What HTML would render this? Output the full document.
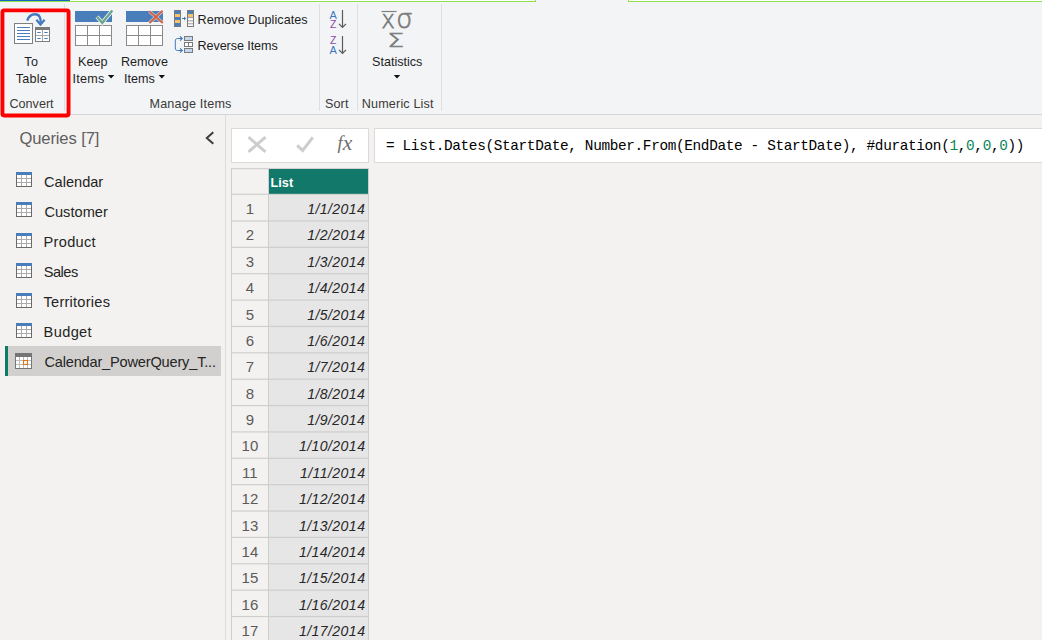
<!DOCTYPE html>
<html><head><meta charset="utf-8"><title>Power Query Editor</title>
<style>
*{box-sizing:border-box;margin:0;padding:0}
html,body{width:1042px;height:640px;overflow:hidden;background:#f3f2f1}
body{position:relative;font-family:"Liberation Sans",sans-serif;color:#252423}
.abs,.t,.sep,svg{position:absolute}
.t{white-space:nowrap;line-height:16px;font-size:12.6px;color:#1e1e1e}
#ribbon{position:absolute;left:0;top:0;width:1042px;height:114px;background:#f3f4f6}
#ribbonline{position:absolute;left:0;top:114px;width:1042px;height:1px;background:#d6d6d6}
.sep{width:1px;top:4px;height:107px;background:#dedfe1}
.gl{color:#3b3a39}
.q{font-size:14.6px;line-height:20px;color:#252423;left:44px}
.qi{left:16px;width:17px;height:16px}
.idx{position:absolute;left:231.4px;width:37px;text-align:center;font-size:15px;line-height:20px;color:#5d5b59}
.dt{position:absolute;left:270px;width:95.4px;text-align:right;font-style:italic;font-size:14.1px;letter-spacing:0.42px;line-height:20px;color:#262626}
#fx{font-family:"Liberation Mono",monospace;font-size:14.4px;letter-spacing:-0.35px;line-height:20px;color:#000;left:386px;top:136px;white-space:pre}
#fx b{font-weight:normal;color:#098658}
</style></head><body>
<div id="ribbon"></div>
<div id="ribbonline"></div>
<!-- top lines -->
<div class="abs" style="left:0;top:0;width:70px;height:1px;background:#1565c0"></div>
<div class="abs" style="left:70px;top:0;width:466px;height:1px;background:#fff"></div>
<div class="abs" style="left:0;top:1px;width:536px;height:1px;background:#8fe04a"></div>
<div class="abs" style="left:628px;top:0;width:414px;height:1px;background:#fff"></div>
<div class="abs" style="left:628px;top:1px;width:414px;height:1px;background:#8fe04a"></div>
<div class="abs" style="left:535px;top:0;width:1px;height:2px;background:#8fe04a"></div>
<div class="abs" style="left:628px;top:0;width:1px;height:2px;background:#8fe04a"></div>

<div class="sep" style="left:64px"></div>
<div class="sep" style="left:319px"></div>
<div class="sep" style="left:357px"></div>
<div class="sep" style="left:441px"></div>

<!-- ribbon labels -->
<span class="t" id="t_to" style="left:24.2px;top:54px;letter-spacing:0.48px">To</span>
<span class="t" id="t_table" style="left:15.8px;top:71px;letter-spacing:0.24px">Table</span>
<span class="t gl" id="t_convert" style="left:9.5px;top:96px">Convert</span>
<span class="t" id="t_keep" style="left:78px;top:54px">Keep</span>
<span class="t" id="t_items1" style="left:72.5px;top:71px;letter-spacing:0.24px">Items</span>
<span class="t" id="t_remove" style="left:121px;top:54px">Remove</span>
<span class="t" id="t_items2" style="left:124px;top:71px">Items</span>
<span class="t" id="t_remdup" style="left:197.5px;top:12px;letter-spacing:0.06px">Remove Duplicates</span>
<span class="t" id="t_rev" style="left:197.5px;top:38px;letter-spacing:-0.08px">Reverse Items</span>
<span class="t gl" id="t_manage" style="left:149.5px;top:96px;letter-spacing:0.19px">Manage Items</span>
<span class="t gl" id="t_sort" style="left:325.0px;top:96px;letter-spacing:0.11px">Sort</span>
<span class="t gl" id="t_numeric" style="left:361.8px;top:96px;letter-spacing:0.16px">Numeric List</span>
<span class="t" id="t_stats" style="left:372px;top:54px">Statistics</span>

<!-- ICONS-RIBBON -->
<svg style="left:0;top:0" width="460" height="114" viewBox="0 0 460 114">
<!-- To Table -->
<rect x="14.5" y="23.5" width="18" height="20" fill="#fff" stroke="#7f7f7f"/>
<path d="M17 27.5h13M17 30.5h13M17 33.5h13M17 36.5h13M17 39.5h13" stroke="#4a7ebb" stroke-width="1" fill="none"/>
<rect x="35.5" y="27.5" width="14" height="14" fill="#fff" stroke="#7f7f7f"/>
<rect x="35" y="27" width="15" height="3" fill="#7a7a7a"/>
<path d="M42.5 30v11M36 35.5h13" stroke="#a6a6a6" stroke-width="1" fill="none"/>
<path d="M37.3 32.5h3.4M44.3 32.5h3.4M37.3 38.5h3.4M44.3 38.5h3.4" stroke="#4a7ebb" stroke-width="1" fill="none"/>
<path d="M27.2 20.6C29 15.5 32.5 14.3 35 14.3c4.2 0 6 3.2 5.6 8.5" stroke="#4179be" stroke-width="2.4" fill="none"/>
<path d="M36.4 19.8l4.1 4.8 4.1-4.8" stroke="#4179be" stroke-width="2.2" fill="none"/>
<!-- Keep Items -->
<rect x="75" y="11" width="37" height="11" fill="#4a7ebb"/>
<rect x="75.5" y="25.5" width="36" height="20" fill="#fff" stroke="#8a8a8a"/>
<path d="M87.5 25v21M99.5 25v21M75 35.5h37" stroke="#8a8a8a" stroke-width="1" fill="none"/>
<path d="M97 16.8l5.3 6L112.3 10.6" stroke="#f3f4f6" stroke-width="4" fill="none"/>
<path d="M97 16.8l5.3 6L112.3 10.6" stroke="#6ba78f" stroke-width="2.4" fill="none"/>
<!-- Remove Items -->
<rect x="126" y="11" width="37" height="11" fill="#4a7ebb"/>
<rect x="126.5" y="25.5" width="36" height="20" fill="#fff" stroke="#8a8a8a"/>
<path d="M138.5 25v21M150.5 25v21M126 35.5h37" stroke="#8a8a8a" stroke-width="1" fill="none"/>
<path d="M149.3 11.2L162.8 23M162.6 10.8L149.4 23" stroke="#f3f4f6" stroke-width="3.4" fill="none" opacity=".7"/>
<path d="M149.3 11.2L162.8 23M162.6 10.8L149.4 23" stroke="#d4613e" stroke-width="2" fill="none"/>
<!-- Remove Duplicates -->
<rect x="174.5" y="10.5" width="6" height="16" fill="#4a7ebb" stroke="#7a7a7a"/>
<rect x="175" y="14" width="5" height="3" fill="#f6c36c"/>
<rect x="175" y="20" width="5" height="3" fill="#f6c36c"/>
<rect x="187.5" y="10.5" width="6" height="16" fill="#fff" stroke="#7a7a7a"/>
<rect x="188" y="11" width="5" height="3" fill="#4a7ebb"/>
<rect x="188" y="14" width="5" height="3" fill="#f6c36c"/>
<path d="M188 17.600h5M188 20.900h5M188 23.800h5" stroke="#8a8a8a" stroke-width=".9"/>
<path d="M182 18.5h3.6M184 16.9l1.7 1.6-1.7 1.6" stroke="#3f78bd" stroke-width="1" fill="none"/>
<!-- Reverse Items -->
<rect x="184.5" y="36.5" width="8" height="4" fill="#c3d8ee" stroke="#7a7a7a"/>
<rect x="184.5" y="42.5" width="8" height="4" fill="#fff" stroke="#7a7a7a"/>
<path d="M188.5 42.5v4" stroke="#7a7a7a"/>
<rect x="184.500" y="48.5" width="8" height="4" fill="#c3d8ee" stroke="#7a7a7a"/>
<path d="M182 38.5h-4.200c-2 0-2.500 1-2.500 2.500v7c0 1.500.5 2.500 2.500 2.500h4.200" stroke="#3f78bd" stroke-width="1" fill="none"/>
<path d="M180 36.300l2.300 2.200-2.300 2.200M180 48.300l2.300 2.200-2.300 2.200" stroke="#3f78bd" stroke-width="1.100" fill="none"/>
<!-- Sort -->
<text x="329.500" y="18.500" font-family="Liberation Sans, sans-serif" font-size="11" fill="#3c78c0">A</text>
<text x="330" y="27.600" font-family="Liberation Sans, sans-serif" font-size="10.500" fill="#8d4aa8">Z</text>
<path d="M342.500 10v17.300M339 23.800l3.500 3.700 3.500-3.700" stroke="#5a5a5a" stroke-width="1.200" fill="none"/>
<text x="330" y="43.600" font-family="Liberation Sans, sans-serif" font-size="10.500" fill="#8d4aa8">Z</text>
<text x="329.500" y="53.500" font-family="Liberation Sans, sans-serif" font-size="11" fill="#3c78c0">A</text>
<path d="M342.500 36v17.300M339 49.800l3.500 3.700 3.500-3.700" stroke="#5a5a5a" stroke-width="1.200" fill="none"/>
<!-- Statistics -->
<path d="M381.500 11.500h15" stroke="#808080" stroke-width="1.200"/>
<g font-family="DejaVu Sans, sans-serif" font-weight="200" fill="#7d7d7d" stroke="#7d7d7d" stroke-width=".75">
<text x="381.500" y="27.500" font-size="19.200">X</text>
<text x="396.200" y="27.500" font-size="26">σ</text>
<text transform="translate(387.400 47) scale(1.320 1)" font-size="19.800">Σ</text>
</g>
<!-- dropdown arrows -->
<path d="M107.900 75h6.400l-3.200 3.500zM158.600 75h6.400l-3.200 3.500zM393.800 75h6.400l-3.200 3.500z" fill="#111"/>
</svg>
<!-- /ICONS-RIBBON -->

<!-- red highlight -->
<svg style="left:0;top:0" width="80" height="125" viewBox="0 0 80 125"><rect x="2.45" y="10.35" width="66.1" height="105.1" rx="1.6" fill="none" stroke="#fe0000" stroke-width="3.9"/></svg>

<!-- left pane -->
<div class="abs" style="left:225px;top:115px;width:1px;height:525px;background:#dcdbda"></div>
<span class="t" id="t_queries" style="left:19.4px;top:128px;font-size:16.6px;line-height:22px;color:#605e5c;letter-spacing:-0.12px">Queries [7]</span>
<div class="abs" style="left:5px;top:346px;width:216px;height:30px;background:#d2d0ce"></div>
<div class="abs" style="left:5px;top:346px;width:3px;height:30px;background:#0f7b66"></div>
<span class="t q" id="t_q0" style="left:44px;top:172px">Calendar</span>
<span class="t q" id="t_q1" style="left:44.4px;top:202px;letter-spacing:0.03px">Customer</span>
<span class="t q" id="t_q2" style="left:43.6px;top:232px;letter-spacing:0.29px">Product</span>
<span class="t q" id="t_q3" style="left:43.8px;top:262px;letter-spacing:-0.52px">Sales</span>
<span class="t q" id="t_q4" style="left:43.5px;top:292px;letter-spacing:0.24px">Territories</span>
<span class="t q" id="t_q5" style="left:43.6px;top:322px;letter-spacing:0.36px">Budget</span>
<span class="t q" id="t_q6" style="left:44.4px;top:352px;letter-spacing:-0.19px">Calendar_PowerQuery_T...</span>
<!-- ICONS-PANE -->
<svg style="left:0;top:165px" width="60" height="215" viewBox="0 165 60 215">

<g transform="translate(0 0)">
<rect x="16" y="172" width="16" height="15" fill="#6a6a6a"/>
<rect x="17" y="175" width="14" height="11" fill="#ababab"/>
<rect x="16" y="172" width="16" height="3" fill="#4a7ebb"/>
<path d="M17 175h4v3h-4zM22 175h4v3h-4zM27 175h4v3h-4zM17 179h4v3h-4zM22 179h4v3h-4zM27 179h4v3h-4zM17 183h4v3h-4zM22 183h4v3h-4zM27 183h4v3h-4z" fill="#fff"/>
</g>
<g transform="translate(0 30)">
<rect x="16" y="172" width="16" height="15" fill="#6a6a6a"/>
<rect x="17" y="175" width="14" height="11" fill="#ababab"/>
<rect x="16" y="172" width="16" height="3" fill="#4a7ebb"/>
<path d="M17 175h4v3h-4zM22 175h4v3h-4zM27 175h4v3h-4zM17 179h4v3h-4zM22 179h4v3h-4zM27 179h4v3h-4zM17 183h4v3h-4zM22 183h4v3h-4zM27 183h4v3h-4z" fill="#fff"/>
</g>
<g transform="translate(0 61)">
<rect x="16" y="172" width="16" height="15" fill="#6a6a6a"/>
<rect x="17" y="175" width="14" height="11" fill="#ababab"/>
<rect x="16" y="172" width="16" height="3" fill="#4a7ebb"/>
<path d="M17 175h4v3h-4zM22 175h4v3h-4zM27 175h4v3h-4zM17 179h4v3h-4zM22 179h4v3h-4zM27 179h4v3h-4zM17 183h4v3h-4zM22 183h4v3h-4zM27 183h4v3h-4z" fill="#fff"/>
</g>
<g transform="translate(0 91)">
<rect x="16" y="172" width="16" height="15" fill="#6a6a6a"/>
<rect x="17" y="175" width="14" height="11" fill="#ababab"/>
<rect x="16" y="172" width="16" height="3" fill="#4a7ebb"/>
<path d="M17 175h4v3h-4zM22 175h4v3h-4zM27 175h4v3h-4zM17 179h4v3h-4zM22 179h4v3h-4zM27 179h4v3h-4zM17 183h4v3h-4zM22 183h4v3h-4zM27 183h4v3h-4z" fill="#fff"/>
</g>
<g transform="translate(0 121)">
<rect x="16" y="172" width="16" height="15" fill="#6a6a6a"/>
<rect x="17" y="175" width="14" height="11" fill="#ababab"/>
<rect x="16" y="172" width="16" height="3" fill="#4a7ebb"/>
<path d="M17 175h4v3h-4zM22 175h4v3h-4zM27 175h4v3h-4zM17 179h4v3h-4zM22 179h4v3h-4zM27 179h4v3h-4zM17 183h4v3h-4zM22 183h4v3h-4zM27 183h4v3h-4z" fill="#fff"/>
</g>
<g transform="translate(0 151)">
<rect x="16" y="172" width="16" height="15" fill="#6a6a6a"/>
<rect x="17" y="175" width="14" height="11" fill="#ababab"/>
<rect x="16" y="172" width="16" height="3" fill="#4a7ebb"/>
<path d="M17 175h4v3h-4zM22 175h4v3h-4zM27 175h4v3h-4zM17 179h4v3h-4zM22 179h4v3h-4zM27 179h4v3h-4zM17 183h4v3h-4zM22 183h4v3h-4zM27 183h4v3h-4z" fill="#fff"/>
</g>
<rect x="15" y="353" width="17" height="16" fill="#757575"/>
<rect x="16" y="357" width="15" height="11" fill="#bdbdbd"/>
<path d="M16 357h3v3h-3zM20 357h3v3h-3zM24 357h3v3h-3zM28 357h3v3h-3zM16 361h3v3h-3zM20 361h3v3h-3zM24 361h3v3h-3zM28 361h3v3h-3zM16 365h3v3h-3zM20 365h3v3h-3zM24 365h3v3h-3zM28 365h3v3h-3z" fill="#fff"/>
<rect x="23.500" y="360.500" width="4" height="4" fill="#fff" stroke="#e07419" stroke-width="1.100"/>
</svg>
<svg style="left:200px;top:128px" width="20" height="20" viewBox="200 128 20 20">
<path d="M213.300 132.300l-6.500 5.700 6.500 5.700" stroke="#3d3d3d" stroke-width="2" fill="none"/>
</svg>
<!-- /ICONS-PANE -->

<!-- formula bar -->
<div class="abs" style="left:231px;top:128px;width:138px;height:35px;background:#fff;border:1px solid #dbdad9"></div>
<div class="abs" style="left:374px;top:128px;width:680px;height:35px;background:#fff;border:1px solid #dbdad9"></div>
<span class="t" id="fx">= List.Dates(StartDate, Number.From(EndDate - StartDate), #duration(<b>1</b>,<b>0</b>,<b>0</b>,<b>0</b>))</span>
<!-- ICONS-FX -->
<svg style="left:232px;top:129px" width="136" height="33" viewBox="232 129 136 33">
<path d="M248.500 137.200l17 14.600M265.500 137.200l-17 14.600" stroke="#cdcdcd" stroke-width="3" fill="none"/>
<path d="M297.200 145.300l5.500 5.200L312.800 137.300" stroke="#cdcdcd" stroke-width="3" fill="none"/>
<text x="337.500" y="150" font-family="Liberation Serif, serif" font-style="italic" font-size="21.500" fill="#6e6e6e" letter-spacing="0"><tspan font-size="18.500" dy="-1.200">f</tspan><tspan dy="1.200">x</tspan></text>
</svg>
<!-- /ICONS-FX -->

<!-- table -->
<div id="grid">
<svg style="left:231px;top:168px" width="138" height="472" viewBox="231 168 138 472">
<rect x="231" y="168.1" width="138" height="480" fill="#cfcecd"/>
<rect x="232" y="169.2" width="36" height="24.50" fill="#f3f2f1"/>
<rect x="269" y="169" width="99" height="24.80" fill="#11786a"/>
<rect x="232" y="194.90" width="36" height="25.47" fill="#f3f2f1"/><rect x="269" y="194.90" width="99" height="25.47" fill="#e6e6e6"/>
<rect x="232" y="221.57" width="36" height="25.17" fill="#f3f2f1"/><rect x="269" y="221.57" width="99" height="25.17" fill="#e6e6e6"/>
<rect x="232" y="247.94" width="36" height="25.17" fill="#f3f2f1"/><rect x="269" y="247.94" width="99" height="25.17" fill="#e6e6e6"/>
<rect x="232" y="274.31" width="36" height="25.17" fill="#f3f2f1"/><rect x="269" y="274.31" width="99" height="25.17" fill="#e6e6e6"/>
<rect x="232" y="300.68" width="36" height="25.17" fill="#f3f2f1"/><rect x="269" y="300.68" width="99" height="25.17" fill="#e6e6e6"/>
<rect x="232" y="327.05" width="36" height="25.17" fill="#f3f2f1"/><rect x="269" y="327.05" width="99" height="25.17" fill="#e6e6e6"/>
<rect x="232" y="353.42" width="36" height="25.17" fill="#f3f2f1"/><rect x="269" y="353.42" width="99" height="25.17" fill="#e6e6e6"/>
<rect x="232" y="379.79" width="36" height="25.17" fill="#f3f2f1"/><rect x="269" y="379.79" width="99" height="25.17" fill="#e6e6e6"/>
<rect x="232" y="406.16" width="36" height="25.17" fill="#f3f2f1"/><rect x="269" y="406.16" width="99" height="25.17" fill="#e6e6e6"/>
<rect x="232" y="432.53" width="36" height="25.17" fill="#f3f2f1"/><rect x="269" y="432.53" width="99" height="25.17" fill="#e6e6e6"/>
<rect x="232" y="458.90" width="36" height="25.17" fill="#f3f2f1"/><rect x="269" y="458.90" width="99" height="25.17" fill="#e6e6e6"/>
<rect x="232" y="485.27" width="36" height="25.17" fill="#f3f2f1"/><rect x="269" y="485.27" width="99" height="25.17" fill="#e6e6e6"/>
<rect x="232" y="511.64" width="36" height="25.17" fill="#f3f2f1"/><rect x="269" y="511.64" width="99" height="25.17" fill="#e6e6e6"/>
<rect x="232" y="538.01" width="36" height="25.17" fill="#f3f2f1"/><rect x="269" y="538.01" width="99" height="25.17" fill="#e6e6e6"/>
<rect x="232" y="564.38" width="36" height="25.17" fill="#f3f2f1"/><rect x="269" y="564.38" width="99" height="25.17" fill="#e6e6e6"/>
<rect x="232" y="590.75" width="36" height="25.17" fill="#f3f2f1"/><rect x="269" y="590.75" width="99" height="25.17" fill="#e6e6e6"/>
<rect x="232" y="617.12" width="36" height="25.17" fill="#f3f2f1"/><rect x="269" y="617.12" width="99" height="25.17" fill="#e6e6e6"/>
<rect x="232" y="643.49" width="36" height="25.17" fill="#f3f2f1"/><rect x="269" y="643.49" width="99" height="25.17" fill="#e6e6e6"/>
</svg>
<span class="t" id="t_list" style="left:270.6px;top:174px;font-weight:bold;font-size:12.7px;line-height:18px;color:#fff">List</span>
<span class="idx" style="top:199px">1</span><span class="dt" style="top:199px">1/1/2014</span>
<span class="idx" style="top:225px">2</span><span class="dt" style="top:225px">1/2/2014</span>
<span class="idx" style="top:252px">3</span><span class="dt" style="top:252px">1/3/2014</span>
<span class="idx" style="top:278px">4</span><span class="dt" style="top:278px">1/4/2014</span>
<span class="idx" style="top:305px">5</span><span class="dt" style="top:305px">1/5/2014</span>
<span class="idx" style="top:331px">6</span><span class="dt" style="top:331px">1/6/2014</span>
<span class="idx" style="top:357px">7</span><span class="dt" style="top:357px">1/7/2014</span>
<span class="idx" style="top:384px">8</span><span class="dt" style="top:384px">1/8/2014</span>
<span class="idx" style="top:410px">9</span><span class="dt" style="top:410px">1/9/2014</span>
<span class="idx" style="top:436px">10</span><span class="dt" style="top:436px">1/10/2014</span>
<span class="idx" style="top:463px">11</span><span class="dt" style="top:463px">1/11/2014</span>
<span class="idx" style="top:489px">12</span><span class="dt" style="top:489px">1/12/2014</span>
<span class="idx" style="top:516px">13</span><span class="dt" style="top:516px">1/13/2014</span>
<span class="idx" style="top:542px">14</span><span class="dt" style="top:542px">1/14/2014</span>
<span class="idx" style="top:568px">15</span><span class="dt" style="top:568px">1/15/2014</span>
<span class="idx" style="top:595px">16</span><span class="dt" style="top:595px">1/16/2014</span>
<span class="idx" style="top:621px">17</span><span class="dt" style="top:621px">1/17/2014</span>
<span class="idx" style="top:647px">18</span><span class="dt" style="top:647px">1/18/2014</span>
</div><!--/grid-->
</body></html>
